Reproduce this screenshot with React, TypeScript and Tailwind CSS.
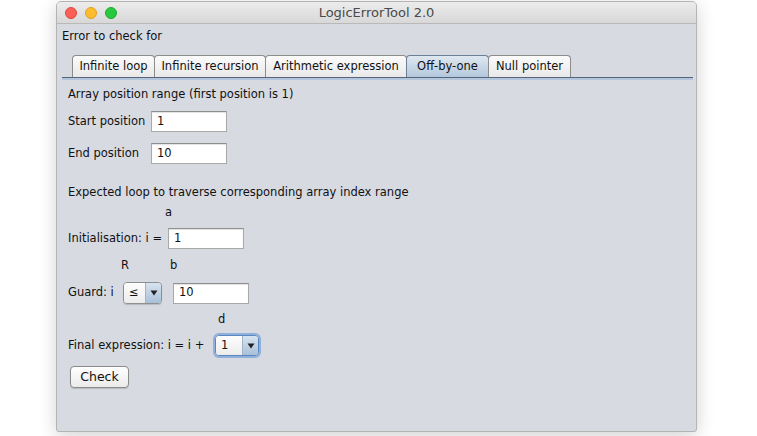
import React from "react";

const font = { fontFamily: '"DejaVu Sans", "Noto Sans", sans-serif' };

function Tab({ label, w, selected }: { label: string; w: string; selected?: boolean }) {
  return (
    <div
      className={
        "h-[22px] flex items-center justify-center rounded-t-[4px] border border-b-0 text-[11.5px] text-[#111] -mr-px " +
        w +
        (selected
          ? " bg-gradient-to-b from-[#dfe8f1] to-[#b3c8dd] border-[#6d7f96]"
          : " bg-gradient-to-b from-[#fbfbfb] to-[#e9e9e9] border-[#8c8c8c]")
      }
    >
      {label}
    </div>
  );
}

function Field({ value, w = "w-[76px]" }: { value: string; w?: string }) {
  return (
    <div
      className={
        "h-[21px] bg-white border border-[#a9a9a9] border-t-[#8e8e8e] shadow-[inset_0_1px_1px_rgba(0,0,0,0.12)] flex items-center pl-[5px] text-[11.5px] text-[#111] " +
        w
      }
    >
      {value}
    </div>
  );
}

function Combo({ value, w, h, focused }: { value: string; w: string; h: string; focused?: boolean }) {
  return (
    <div
      className={
        "flex rounded-[4px] border overflow-hidden text-[11.5px] text-[#111] " +
        w +
        " " +
        h +
        (focused
          ? " border-[#5b87c0] shadow-[0_0_0_2px_rgba(120,160,215,0.75)]"
          : " border-[#8f8f8f] shadow-[0_1px_1px_rgba(0,0,0,0.15)]")
      }
    >
      <div className="flex-1 flex items-center pl-[5px] bg-gradient-to-b from-[#fdfdfd] to-[#ececec]">{value}</div>
      <div className="w-[16px] flex items-center justify-center border-l border-[#9fb3c9] bg-gradient-to-b from-[#d8e4f0] to-[#a9c0d8]">
        <svg width="8" height="6" viewBox="0 0 8 6">
          <path d="M0.5 0.5 L7.5 0.5 L4 5.5 Z" fill="#222" />
        </svg>
      </div>
    </div>
  );
}

export default function App() {
  return (
    <div className="w-[757px] h-[436px] bg-white overflow-hidden" style={font}>
      <div className="ml-[56px] mt-[1px] w-[641px] h-[431px] flex flex-col rounded-t-[5px] rounded-b-[3px] border border-[#b4b4b4] bg-[#d7dae1] shadow-[0_4px_18px_rgba(0,0,0,0.18)] overflow-hidden">
        {/* title bar */}
        <div className="h-[22px] shrink-0 flex items-center relative border-b border-[#b9b9b9] bg-gradient-to-b from-[#ececec] to-[#d8d8d8]">
          <div className="flex items-center gap-[8px] pl-[8px]">
            <div className="w-[12px] h-[12px] rounded-full bg-[#fc5f57] border border-[#e0463f]" />
            <div className="w-[12px] h-[12px] rounded-full bg-[#fdbc2e] border border-[#dfa023]" />
            <div className="w-[12px] h-[12px] rounded-full bg-[#28c840] border border-[#1eab32]" />
          </div>
          <div className="absolute inset-0 flex items-center justify-center text-[13px] text-[#4a4a4a]">
            LogicErrorTool 2.0
          </div>
        </div>

        {/* content */}
        <div className="flex flex-col pl-[5px] pr-[3px]">
          <div className="h-[16px] mt-[5px] flex items-center text-[11.5px] text-[#111]">Error to check for</div>

          <div className="mt-[10px] flex pl-[10px]">
            <Tab label="Infinite loop" w="w-[83px]" />
            <Tab label="Infinite recursion" w="w-[112px]" />
            <Tab label="Arithmetic expression" w="w-[142px]" />
            <Tab label="Off-by-one" w="w-[83px]" selected />
            <Tab label="Null pointer" w="w-[83px]" />
          </div>
          <div className="h-px bg-[#56657c]" />
          <div className="h-[2px] bg-[#b3c6dc]" />

          <div className="flex flex-col pl-[6px] text-[11.5px] text-[#111]">
            <div className="h-[16px] mt-[7px] flex items-center">Array position range (first position is 1)</div>

            <div className="mt-[8px] flex items-center">
              <div className="w-[83px]">Start position</div>
              <Field value="1" />
            </div>
            <div className="mt-[11px] flex items-center">
              <div className="w-[83px]">End position</div>
              <Field value="10" />
            </div>

            <div className="h-[16px] mt-[21px] flex items-center">
              Expected loop to traverse corresponding array index range
            </div>
            <div className="h-[16px] mt-[4px] flex items-center pl-[97px]">a</div>

            <div className="mt-[7px] flex items-center">
              <div className="w-[100px]">Initialisation: i =</div>
              <Field value="1" />
            </div>

            <div className="h-[16px] mt-[9px] flex items-center">
              <div className="pl-[53px] w-[102px]">R</div>
              <div>b</div>
            </div>

            <div className="mt-[8px] flex items-center">
              <div className="w-[55px]">Guard: i</div>
              <Combo value="≤" w="w-[39px]" h="h-[22px]" />
              <div className="w-[11px]" />
              <Field value="10" />
            </div>

            <div className="h-[16px] mt-[8px] flex items-center pl-[150px]">d</div>

            <div className="mt-[7px] flex items-center">
              <div className="w-[147px]">Final expression: i = i +</div>
              <Combo value="1" w="w-[44px]" h="h-[21px]" focused />
            </div>

            <div className="mt-[10px] flex">
              <div className="ml-[2px] w-[59px] h-[22px] flex items-center justify-center rounded-[4px] border border-[#8a8a8a] bg-gradient-to-b from-[#ffffff] to-[#ebebeb] shadow-[0_1px_1px_rgba(0,0,0,0.15)] text-[12.5px]">
                Check
              </div>
            </div>
          </div>
        </div>
      </div>
    </div>
  );
}
